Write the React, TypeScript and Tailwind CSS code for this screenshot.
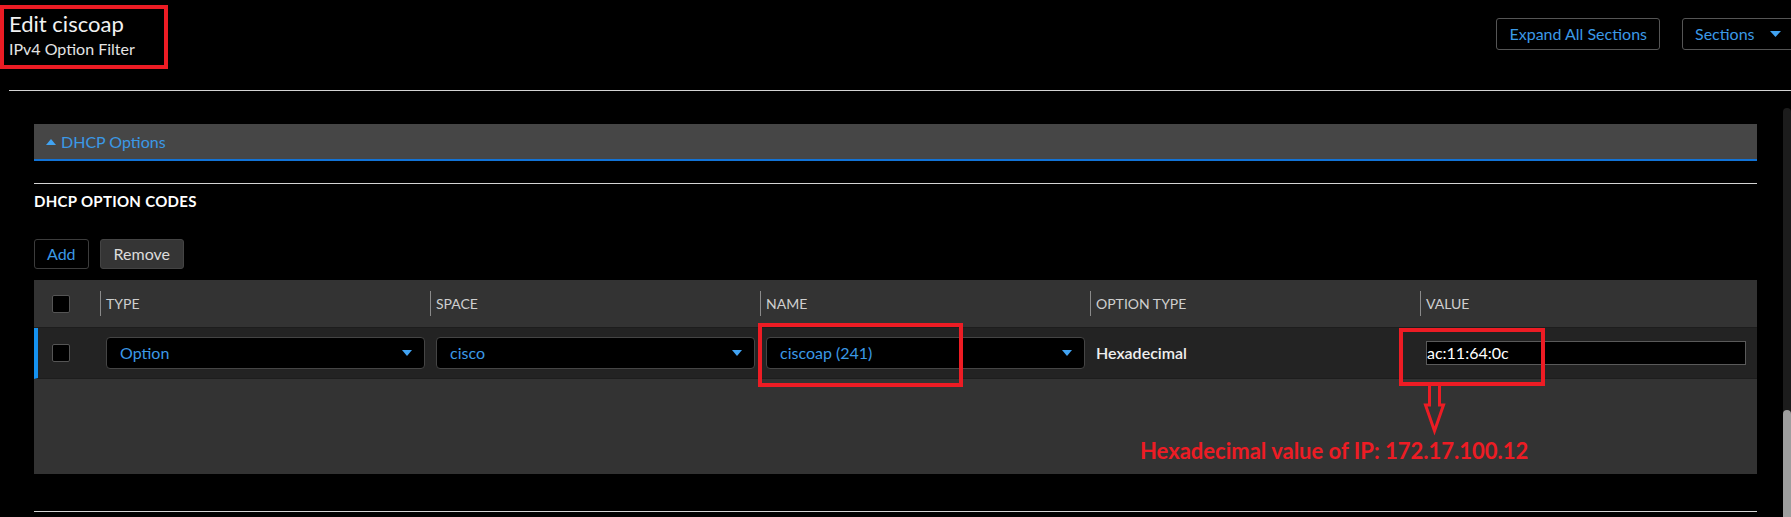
import React from "react";

function Down({ w = 10, h = 6 }: { w?: number; h?: number }) {
  return (
    <svg width={w} height={h} viewBox={`0 0 ${w} ${h}`} className="shrink-0">
      <path d={`M0 0 H${w} L${w / 2} ${h} Z`} fill="#41a3f2" />
    </svg>
  );
}

function Up() {
  return (
    <svg width={10} height={6} viewBox="0 0 10 6" className="shrink-0">
      <path d="M0 6 H10 L5 0 Z" fill="#41a3f2" />
    </svg>
  );
}

function Select({ label }: { label: string }) {
  return (
    <div className="flex h-[32px] w-full items-center justify-between rounded-[4px] border border-[#454545] bg-black pl-[13px] pr-[12px] text-[16px] text-[#3b99e6]">
      <span>{label}</span>
      <Down />
    </div>
  );
}

function HeadCell({ label }: { label: string }) {
  return (
    <div className="flex items-center">
      <div className="h-[25px] w-px bg-[#8a8a8a]" />
      <span className="ml-[5px] text-[14px] text-[#cfcfcf]">{label}</span>
    </div>
  );
}

export default function App() {
  return (
    <div className="relative h-[517px] w-[1791px] overflow-hidden bg-black text-white [font-family:Lato,'Noto_Sans',sans-serif]">
      {/* Header */}
      <div className="flex h-[90px] items-start justify-between">
        <div className="pl-[9px] pt-[11px]">
          <div className="text-[22px] leading-[26px] text-[#f2f2f2]">Edit ciscoap</div>
          <div className="mt-[2px] text-[16px] leading-[20px] text-[#e4e4e4]">IPv4 Option Filter</div>
        </div>
        <div className="mr-[-16px] mt-[18px] flex gap-[22px]">
          <button className="h-[32px] rounded-[3px] border border-[#555] bg-black px-[12px] text-[16px] text-[#3b99e6]">
            Expand All Sections
          </button>
          <button className="flex h-[32px] w-[125px] items-center justify-between rounded-[3px] border border-[#555] bg-black pl-[12px] pr-[25px] text-[16px] text-[#3b99e6]">
            <span>Sections</span>
            <Down w={11} h={6} />
          </button>
        </div>
      </div>
      <div className="ml-[9px] h-px bg-[#d4d4d4]" />

      {/* Body */}
      <div className="flex">
        <div className="flex-1 pl-[34px] pr-[26px] pt-[33px]">
          <div className="flex h-[37px] items-center border-b-2 border-[#1273d6] bg-[#464646] pl-[12px]">
            <Up />
            <span className="ml-[5px] text-[16px] text-[#3b99e6]">DHCP Options</span>
          </div>
          <div className="mt-[22px] h-px bg-[#d4d4d4]" />
          <div className="mt-[8px] text-[15px] font-bold leading-[18px] tracking-[0.3px] text-white">DHCP OPTION CODES</div>
          <div className="mt-[29px] flex gap-[11px]">
            <button className="h-[30px] rounded-[3px] border border-[#3c3c3c] bg-black px-[12px] text-[16px] text-[#3b99e6]">
              Add
            </button>
            <button className="h-[30px] rounded-[3px] border border-[#444] bg-[#353535] px-[13px] text-[16px] text-[#dcdcdc]">
              Remove
            </button>
          </div>

          {/* Table */}
          <div className="mt-[11px]">
            <div className="grid h-[48px] grid-cols-[66px_330px_330px_330px_330px_1fr] border-b border-[#1d1d1d] bg-[#333333]">
              <div className="flex items-center pl-[18px]">
                <div className="h-[18px] w-[18px] rounded-[2px] border border-[#555] bg-black" />
              </div>
              <HeadCell label="TYPE" />
              <HeadCell label="SPACE" />
              <HeadCell label="NAME" />
              <HeadCell label="OPTION TYPE" />
              <HeadCell label="VALUE" />
            </div>
            <div className="grid h-[51px] grid-cols-[62px_330px_330px_330px_330px_1fr] border-b border-l-4 border-b-[#1d1d1d] border-l-[#1592f0] bg-[#232323]">
              <div className="flex items-center pl-[14px]">
                <div className="h-[18px] w-[18px] rounded-[2px] border border-[#555] bg-black" />
              </div>
              <div className="flex items-center pl-[6px] pr-[5px]">
                <Select label="Option" />
              </div>
              <div className="flex items-center pl-[6px] pr-[5px]">
                <Select label="cisco" />
              </div>
              <div className="flex items-center pl-[6px] pr-[5px]">
                <Select label="ciscoap (241)" />
              </div>
              <div className="flex items-center pl-[6px] text-[16px] font-semibold text-[#efefef]">Hexadecimal</div>
              <div className="flex items-center pl-[6px] pr-[11px]">
                <div className="flex h-[24px] w-full items-center border border-[#5a5a5a] bg-black text-[16px] text-white">
                  ac:11:64:0c
                </div>
              </div>
            </div>
            <div className="h-[95px] bg-[#333333]" />
          </div>
          <div className="mt-[37px] h-px bg-[#d4d4d4]" />
        </div>

        {/* Scrollbar */}
        <div className="mt-[17px] flex h-[409px] w-[8px] flex-col rounded-t-[4px] bg-[#1c1c1c]">
          <div className="mt-[302px] flex-1 rounded-t-[4px] bg-[#9e9e9e]" />
        </div>
      </div>

      {/* Annotations */}
      <div className="absolute left-0 top-[5px] h-[64px] w-[168px] border-4 border-[#ed1c24]" />
      <div className="absolute left-[758px] top-[323px] h-[64px] w-[205px] border-4 border-[#ed1c24]" />
      <div className="absolute left-[1399px] top-[328px] h-[58px] w-[146px] border-4 border-[#ed1c24]" />
      <svg className="absolute left-[1420px] top-[384px]" width="30" height="52" viewBox="0 0 30 52">
        <path d="M9.5 0 V21 H5.5 L14.5 47 L23.5 21 H19.5 V0" fill="none" stroke="#ed1c24" strokeWidth="3" />
      </svg>
      <div className="absolute left-[1140px] top-[438px] whitespace-nowrap text-[22px] font-bold leading-[26px] text-[#ed1c24]">
        Hexadecimal value of IP: 172.17.100.12
      </div>
    </div>
  );
}
